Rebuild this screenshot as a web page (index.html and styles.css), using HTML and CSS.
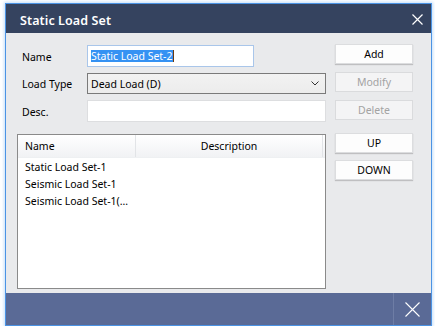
FILE: index.html
```html
<!DOCTYPE html>
<html>
<head>
<meta charset="utf-8">
<link rel="stylesheet" href="styles.css">
</head>
<body>
<div class="window">
  <div class="titlebar">
    <span class="title">Static Load Set</span>
    <div class="close">
      <svg width="11" height="11" viewBox="0 0 11 11"><path d="M0.5 0.5 L10.5 10.5 M10.5 0.5 L0.5 10.5" stroke="#fff" stroke-width="1.2" fill="none"/></svg>
    </div>
  </div>
  <div class="body">
    <div class="main">
      <div class="form">
        <div class="label">Name</div>
        <div class="input name-input"><span class="sel">Static Load Set-2</span><span class="caret"></span></div>
        <div class="label">Load Type</div>
        <div class="select"><span>Dead Load (D)</span>
          <svg class="chev" width="8" height="5" viewBox="0 0 8 5"><path d="M0.5 0.5 L4 4 L7.5 0.5" stroke="#333" stroke-width="1" fill="none"/></svg>
        </div>
        <div class="label">Desc.</div>
        <div class="input desc-input"></div>
      </div>
      <div class="list">
        <div class="list-head">
          <div class="col col-name">Name</div>
          <div class="col col-desc">Description</div>
          <div class="col col-rest"></div>
        </div>
        <div class="rows">
          <div class="row">Static Load Set-1</div>
          <div class="row">Seismic Load Set-1</div>
          <div class="row">Seismic Load Set-1(…</div>
        </div>
      </div>
    </div>
    <div class="buttons">
      <div class="btn">Add</div>
      <div class="btn disabled">Modify</div>
      <div class="btn disabled">Delete</div>
      <div class="btn up">UP</div>
      <div class="btn down">DOWN</div>
    </div>
  </div>
  <div class="footer">
    <div class="fspace"></div>
    <div class="fclose">
      <svg width="15" height="15" viewBox="0 0 15 15"><path d="M0.5 0.5 L14.5 14.5 M14.5 0.5 L0.5 14.5" stroke="#fff" stroke-width="1.1" fill="none"/></svg>
    </div>
  </div>
</div>
</body>
</html>
```
FILE: styles.css
```css
html, body {
  margin: 0;
  padding: 0;
  background: #ffffff;
}
body {
  font-family: "Noto Sans", "Open Sans", sans-serif;
  font-size: 10.5px;
  color: #000;
}
.window {
  margin: 3px 0 0 5px;
  width: 427px;
  height: 323px;
  box-sizing: border-box;
  border: 1px solid #4B93E4;
  box-shadow: 0 0 3px 1px rgba(90, 160, 235, 0.35);
  background: #E9EAEC;
  display: flex;
  flex-direction: column;
}
.titlebar {
  height: 29px;
  flex: none;
  background: #35435F;
  display: flex;
  align-items: center;
  padding-left: 14px;
}
.title {
  color: #fff;
  font-weight: 600;
  font-size: 12.5px;
  letter-spacing: 0.1px;
  padding-top: 3px;
}
.close {
  margin-left: auto;
  width: 28px;
  height: 29px;
  display: flex;
  align-items: center;
  justify-content: center;
  padding-top: 1px;
  box-sizing: border-box;
}
.body {
  flex: 1;
  display: flex;
  padding: 11px 18px 0 11px;
}
.main {
  width: 309px;
  padding-top: 1px;
  display: flex;
  flex-direction: column;
}
.form {
  display: grid;
  grid-template-columns: 70px auto;
  row-gap: 6px;
  align-items: center;
}
.label {
  padding-left: 5px;
  padding-top: 1px;
}
.input {
  box-sizing: border-box;
  background: #fff;
  height: 22px;
  display: flex;
  align-items: center;
  padding-left: 3px;
}
.name-input {
  width: 167px;
  border: 1px solid #A9C6EA;
}
.sel {
  background: #3592F3;
  color: #fff;
  line-height: 12px;
  height: 12px;
  display: inline-block;
}
.caret {
  width: 1px;
  height: 12px;
  background: #6a3a10;
}
.desc-input {
  width: 239px;
  border: 1px solid #DDDEE0;
}
.select {
  box-sizing: border-box;
  width: 239px;
  height: 21px;
  border: 1px solid #7A7A7A;
  background: linear-gradient(#F2F2F2, #ECECEC);
  display: flex;
  align-items: center;
  padding-left: 3px;
  padding-right: 6px;
}
.chev {
  margin-left: auto;
}
.list {
  margin-top: 12px;
  height: 155px;
  box-sizing: border-box;
  border: 1px solid #8A8A8A;
  background: #fff;
  display: flex;
  flex-direction: column;
}
.list-head {
  height: 22px;
  display: flex;
  background: linear-gradient(#FFFFFF, #F1F2F4);
  border-bottom: 1px solid #EEF0F2;
  flex: none;
}
.col {
  display: flex;
  align-items: center;
  box-sizing: border-box;
}
.col-name {
  width: 118px;
  padding-left: 7px;
  border-right: 1px solid #E2E4E7;
}
.col-desc {
  width: 187px;
  justify-content: center;
  border-right: 1px solid #E2E4E7;
}
.col-rest {
  flex: 1;
}
.rows {
  padding-top: 1px;
}
.row {
  height: 17px;
  line-height: 17px;
  padding-left: 7px;
}
.buttons {
  margin-left: 9px;
  width: 78px;
  display: flex;
  flex-direction: column;
}
.btn {
  box-sizing: border-box;
  height: 20px;
  background: #FDFDFD;
  border: 1px solid #DCDDDF;
  box-shadow: 0 1px 1px rgba(0, 0, 0, 0.18);
  display: flex;
  align-items: center;
  justify-content: center;
  margin-bottom: 8px;
}
.btn.disabled {
  color: #A3A3A3;
  background: #F4F4F5;
  box-shadow: none;
  border-color: #DADBDD;
}
.btn.up {
  margin-top: 5px;
  margin-bottom: 7px;
}
.footer {
  height: 32px;
  flex: none;
  background: #5A6A96;
  display: flex;
}
.fspace {
  flex: 1;
}
.fclose {
  width: 38px;
  box-sizing: border-box;
  border-left: 1px solid #6E7DA5;
  display: flex;
  align-items: center;
  justify-content: center;
}
```
